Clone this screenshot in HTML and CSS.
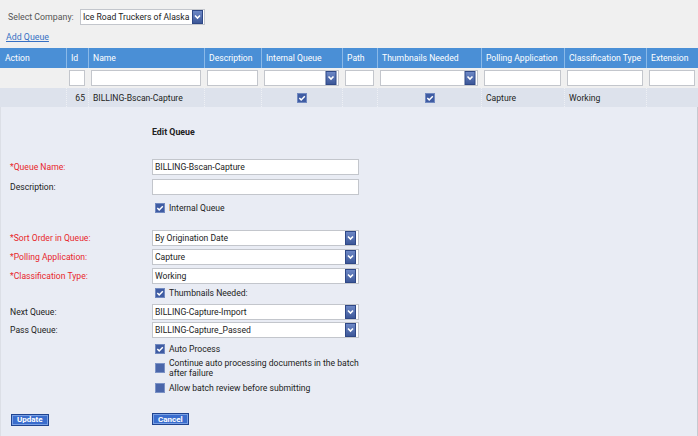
FILE: index.html
```html
<!DOCTYPE html>
<html>
<head>
<meta charset="utf-8">
<title>Queues</title>
<link rel="stylesheet" href="styles.css">
</head>
<body>
<div class="page">
  <div class="topbar">
    <div class="company">
      <span class="lbl-company">Select Company:</span>
      <div class="sel sel-company"><span class="sel-text">Ice Road Truckers of Alaska</span><span class="arrow"><svg viewBox="0 0 11 14" width="11" height="14"><defs><linearGradient id="g1" x1="0" y1="0" x2="0" y2="1"><stop offset="0" stop-color="#6f8ac8"/><stop offset="1" stop-color="#3b5697"/></linearGradient></defs><rect x="0.5" y="0.5" width="10" height="13" fill="url(#g1)" stroke="#2f4886"/><polyline points="3,5.5 5.5,8 8,5.5" fill="none" stroke="#fff" stroke-width="1.6"/></svg></span></div>
    </div>
    <a class="add-link" href="#">Add Queue</a>
  </div>

  <table class="grid">
    <colgroup>
      <col class="c-action"><col class="c-id"><col class="c-name"><col class="c-desc"><col class="c-iq"><col class="c-path"><col class="c-thumb"><col class="c-poll"><col class="c-class"><col class="c-ext">
    </colgroup>
    <thead>
      <tr class="hdr">
        <th>Action</th><th>Id</th><th>Name</th><th>Description</th><th>Internal Queue</th><th>Path</th><th>Thumbnails Needed</th><th>Polling Application</th><th>Classification Type</th><th>Extension</th>
      </tr>
      <tr class="filter">
        <td></td>
        <td><div class="fi"></div></td>
        <td><div class="fi"></div></td>
        <td><div class="fi"></div></td>
        <td><div class="sel fsel"><span class="sel-text"></span><span class="arrow"><svg viewBox="0 0 11 14" width="12" height="14"><rect x="0.5" y="0.5" width="10" height="13" fill="url(#g1)" stroke="#2f4886"/><polyline points="3,5.5 5.5,8 8,5.5" fill="none" stroke="#fff" stroke-width="1.6"/></svg></span></div></td>
        <td><div class="fi"></div></td>
        <td><div class="sel fsel"><span class="sel-text"></span><span class="arrow"><svg viewBox="0 0 11 14" width="12" height="14"><rect x="0.5" y="0.5" width="10" height="13" fill="url(#g1)" stroke="#2f4886"/><polyline points="3,5.5 5.5,8 8,5.5" fill="none" stroke="#fff" stroke-width="1.6"/></svg></span></div></td>
        <td><div class="fi"></div></td>
        <td><div class="fi"></div></td>
        <td><div class="fi"></div></td>
      </tr>
    </thead>
    <tbody>
      <tr class="data">
        <td></td>
        <td class="num">65</td>
        <td>BILLING-Bscan-Capture</td>
        <td></td>
        <td class="ctr"><span class="cb"><svg viewBox="0 0 10 10" width="10" height="10"><rect x="0.5" y="0.5" width="9" height="9" fill="#3f5ca3" stroke="#7189c0"/><polyline points="2.3,5 4.2,6.9 7.8,3.2" fill="none" stroke="#fff" stroke-width="1.5"/></svg></span></td>
        <td></td>
        <td class="ctr"><span class="cb"><svg viewBox="0 0 10 10" width="10" height="10"><rect x="0.5" y="0.5" width="9" height="9" fill="#3f5ca3" stroke="#7189c0"/><polyline points="2.3,5 4.2,6.9 7.8,3.2" fill="none" stroke="#fff" stroke-width="1.5"/></svg></span></td>
        <td>Capture</td>
        <td>Working</td>
        <td></td>
      </tr>
    </tbody>
  </table>

  <div class="form">
    <div class="ftitle"><span class="flabel"></span><span class="title-text">Edit Queue</span></div>

    <div class="frow r-qname"><span class="flabel req">*Queue Name:</span><div class="fin"><span class="sel-text">BILLING-Bscan-Capture</span></div></div>
    <div class="frow r-desc"><span class="flabel">Description:</span><div class="fin"></div></div>
    <div class="frow r-iq"><span class="flabel"></span><span class="cb"><svg viewBox="0 0 10 10" width="10" height="10"><rect x="0.5" y="0.5" width="9" height="9" fill="#3f5ca3" stroke="#7189c0"/><polyline points="2.3,5 4.2,6.9 7.8,3.2" fill="none" stroke="#fff" stroke-width="1.5"/></svg></span><span class="cbl">Internal Queue</span></div>

    <div class="frow r-sort"><span class="flabel req">*Sort Order in Queue:</span><div class="sel fs"><span class="sel-text">By Origination Date</span><span class="arrow"><svg viewBox="0 0 11 14" width="11" height="14"><rect x="0.5" y="0.5" width="10" height="13" fill="url(#g1)" stroke="#2f4886"/><polyline points="3,5.5 5.5,8 8,5.5" fill="none" stroke="#fff" stroke-width="1.6"/></svg></span></div></div>
    <div class="frow r-sel"><span class="flabel req">*Polling Application:</span><div class="sel fs"><span class="sel-text">Capture</span><span class="arrow"><svg viewBox="0 0 11 14" width="11" height="14"><rect x="0.5" y="0.5" width="10" height="13" fill="url(#g1)" stroke="#2f4886"/><polyline points="3,5.5 5.5,8 8,5.5" fill="none" stroke="#fff" stroke-width="1.6"/></svg></span></div></div>
    <div class="frow r-sel"><span class="flabel req">*Classification Type:</span><div class="sel fs"><span class="sel-text">Working</span><span class="arrow"><svg viewBox="0 0 11 14" width="11" height="14"><rect x="0.5" y="0.5" width="10" height="13" fill="url(#g1)" stroke="#2f4886"/><polyline points="3,5.5 5.5,8 8,5.5" fill="none" stroke="#fff" stroke-width="1.6"/></svg></span></div></div>
    <div class="frow r-thumb"><span class="flabel"></span><span class="cb"><svg viewBox="0 0 10 10" width="10" height="10"><rect x="0.5" y="0.5" width="9" height="9" fill="#3f5ca3" stroke="#7189c0"/><polyline points="2.3,5 4.2,6.9 7.8,3.2" fill="none" stroke="#fff" stroke-width="1.5"/></svg></span><span class="cbl">Thumbnails Needed:</span></div>
    <div class="frow r-next"><span class="flabel">Next Queue:</span><div class="sel fs"><span class="sel-text">BILLING-Capture-Import</span><span class="arrow"><svg viewBox="0 0 11 14" width="11" height="14"><rect x="0.5" y="0.5" width="10" height="13" fill="url(#g1)" stroke="#2f4886"/><polyline points="3,5.5 5.5,8 8,5.5" fill="none" stroke="#fff" stroke-width="1.6"/></svg></span></div></div>
    <div class="frow r-pass"><span class="flabel">Pass Queue:</span><div class="sel fs"><span class="sel-text">BILLING-Capture_Passed</span><span class="arrow"><svg viewBox="0 0 11 14" width="11" height="14"><rect x="0.5" y="0.5" width="10" height="13" fill="url(#g1)" stroke="#2f4886"/><polyline points="3,5.5 5.5,8 8,5.5" fill="none" stroke="#fff" stroke-width="1.6"/></svg></span></div></div>
    <div class="frow r-auto"><span class="flabel"></span><span class="cb"><svg viewBox="0 0 10 10" width="10" height="10"><rect x="0.5" y="0.5" width="9" height="9" fill="#3f5ca3" stroke="#7189c0"/><polyline points="2.3,5 4.2,6.9 7.8,3.2" fill="none" stroke="#fff" stroke-width="1.5"/></svg></span><span class="cbl">Auto Process</span></div>
    <div class="frow r-cont"><span class="flabel"></span><span class="cb"><svg viewBox="0 0 10 10" width="10" height="10"><rect x="0.5" y="0.5" width="9" height="9" fill="#4a66aa" stroke="#7b92c6"/></svg></span><span class="cbl wrap">Continue auto processing documents in the batch after failure</span></div>
    <div class="frow r-allow"><span class="flabel"></span><span class="cb"><svg viewBox="0 0 10 10" width="10" height="10"><rect x="0.5" y="0.5" width="9" height="9" fill="#4a66aa" stroke="#7b92c6"/></svg></span><span class="cbl">Allow batch review before submitting</span></div>

    <div class="frow r-btn"><span class="flabel"><button class="btn">Update</button></span><button class="btn">Cancel</button></div>
  </div>
</div>
</body>
</html>
```

FILE: styles.css
```css
html, body {
  margin: 0;
  padding: 0;
  background: #e9ecf4;
}
body {
  font-family: Roboto, "Liberation Sans", sans-serif;
  font-size: 8.6px;
  color: #222;
}
.page {
  width: 698px;
  height: 436px;
  overflow: hidden;
  display: flex;
  flex-direction: column;
}
.topbar {
  background: #f0f0f0;
  height: 48px;
  box-sizing: border-box;
  padding-top: 9px;
}
.company {
  display: flex;
  align-items: center;
  height: 15px;
}
.lbl-company {
  width: 72px;
  padding-left: 8px;
  color: #555;
  font-size: 8.8px;
}
.sel {
  display: flex;
  align-items: center;
  background: #fff;
  border: 1px solid #c3c6cc;
  box-sizing: border-box;
}
.sel-text {
  flex: 1;
  padding-left: 2px;
  white-space: nowrap;
  overflow: hidden;
  line-height: 12px;
}
.arrow {
  display: flex;
  margin-right: 1px;
}
.arrow svg { display: block; }
.sel-company {
  width: 125px;
  height: 16px;
}
.add-link {
  display: block;
  margin-top: 7px;
  margin-left: 6px;
  width: 50px;
  line-height: 12px;
  color: #3670c4;
  text-decoration: underline;
  font-size: 8.8px;
}

/* grid */
.grid {
  width: 698px;
  table-layout: fixed;
  border-collapse: separate;
  border-spacing: 0;
}
.c-action { width: 66px; }
.c-id { width: 22px; }
.c-name { width: 116px; }
.c-desc { width: 57px; }
.c-iq { width: 81px; }
.c-path { width: 35px; }
.c-thumb { width: 104px; }
.c-poll { width: 83px; }
.c-class { width: 82px; }
.c-ext { width: 52px; }

.hdr th {
  background: #4a8fd6;
  color: #fff;
  font-weight: normal;
  text-align: left;
  height: 20px;
  padding: 0 4px;
  border-left: 1px solid #8ab9e8;
  box-sizing: border-box;
  white-space: nowrap;
  overflow: hidden;
}
.hdr th:first-child { border-left: none; padding-left: 5px; }
.filter td {
  background: #f0f0f0;
  height: 20px;
  padding: 2px 3px 2px 3px;
  box-sizing: border-box;
}
.fi {
  height: 16px;
  background: #fff;
  border: 1px solid #c3c6cc;
  box-sizing: border-box;
}
.fsel { height: 16px; }
.data td {
  background: #dde2ec;
  height: 19px;
  padding: 0 4px;
  border-left: 1px dotted #eef0f5;
  box-sizing: border-box;
  white-space: nowrap;
  overflow: hidden;
}
.data td:first-child { border-left: none; }
.data td.num { text-align: right; padding-right: 3px; }
.data td.ctr { text-align: center; }
.cb { display: inline-flex; }
.cb svg { display: block; }
.data .cb { vertical-align: middle; }

/* form */
.form {
  flex: 1;
  background: #e9ecf4;
  border-right: 1px solid #c6c9d0;
  border-left: 1px solid #dcdfe6;
  box-sizing: border-box;
}
.ftitle {
  display: flex;
  margin-top: 18px;
  line-height: 14px;
}
.title-text {
  font-weight: bold;
  font-size: 8.8px;
}
.frow {
  display: flex;
  align-items: center;
}
.flabel {
  width: 151px;
  flex: none;
  padding-left: 9px;
  box-sizing: border-box;
  line-height: 12px;
}
.flabel.req { color: #e8262b; }
.fin {
  width: 207px;
  height: 16px;
  background: #fff;
  border: 1px solid #c3c6cc;
  box-sizing: border-box;
  display: flex;
  align-items: center;
}
.fs {
  width: 207px;
  height: 16px;
}
.fs .arrow { margin-right: 2px; }
.r-qname { margin-top: 20px; }
.r-desc { margin-top: 4px; }
.r-iq { margin-top: 7px; height: 12px; }
.r-sort { margin-top: 16px; }
.r-sel { margin-top: 3px; }
.r-thumb { margin-top: 3px; height: 12px; }
.r-next { margin-top: 5px; }
.r-pass { margin-top: 2px; }
.r-auto { margin-top: 5px; height: 12px; }
.r-cont { margin-top: 3px; }
.r-allow { margin-top: 4px; height: 12px; }
.r-btn { margin-top: 19px; align-items: flex-start; }
.frow .cb { margin-left: 3px; }
.cbl {
  margin-left: 4px;
  line-height: 12px;
  white-space: nowrap;
}
.cbl.wrap {
  white-space: normal;
  width: 194px;
  line-height: 10px;
}
.btn {
  font-family: Roboto, "Liberation Sans", sans-serif;
  font-size: 8px;
  font-weight: bold;
  color: #fff;
  background: #3a6dcd;
  border: 1px solid #1f438f;
  box-shadow: inset 0 0 0 1px #79a0e4;
  height: 12px;
  line-height: 9px;
  padding: 0 5px;
  margin: 0;
  cursor: pointer;
}
.r-btn .flabel { padding-left: 10px; }
```
